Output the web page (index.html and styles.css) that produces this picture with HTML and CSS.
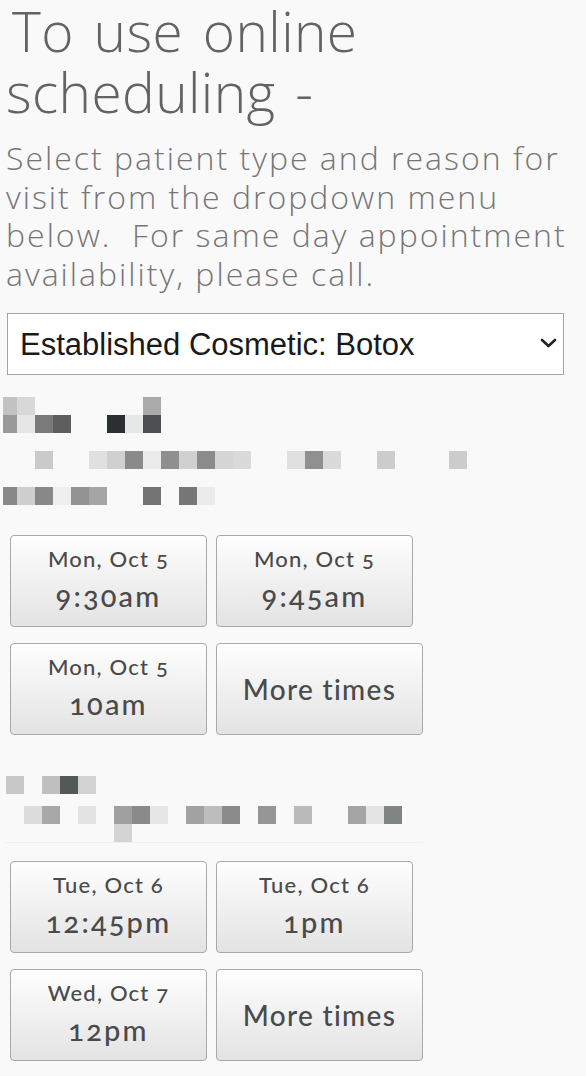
FILE: index.html
```html
<!DOCTYPE html>
<html lang="en">
<head>
<meta charset="utf-8">
<title>Online scheduling</title>
<link rel="stylesheet" href="styles.css">
</head>
<body>
<main class="page">
  <h1 class="title">To use online scheduling -</h1>
  <p class="intro">Select patient type and reason for visit from the dropdown menu below.&nbsp; For same day appointment availability, please call.</p>

  <div class="select-wrap">
    <select class="visit-select">
      <option>Established Cosmetic: Botox</option>
    </select>
    <svg class="chevron" width="17" height="10" viewBox="0 0 17 10"><path d="M2 2 L8.5 8 L15 2" fill="none" stroke="#222" stroke-width="2.6" stroke-linecap="round" stroke-linejoin="round"/></svg>
  </div>

  <div class="mosaic mosaic-a">
    <div class="mrow"><span class="g-c2"></span><span class="g-d8"></span><span></span><span></span><span></span><span></span><span></span><span></span><span class="g-aa"></span></div>
    <div class="mrow"><span class="g-99"></span><span class="g-e6"></span><span class="g-7a"></span><span class="g-5e"></span><span></span><span></span><span class="g-2b"></span><span class="g-e7"></span><span class="g-4b"></span></div>
    <div class="mrow"></div>
    <div class="mrow"><span></span><span></span><span class="g-ca"></span><span></span><span></span><span class="g-e0"></span><span class="g-d0"></span><span class="g-8a"></span><span class="g-eb"></span><span class="g-8f"></span><span class="g-d0"></span><span class="g-8c"></span><span class="g-d6"></span><span class="g-da"></span><span></span><span></span><span class="g-e0"></span><span class="g-90"></span><span class="g-da"></span><span></span><span></span><span class="g-cc"></span><span></span><span></span><span></span><span class="g-cc"></span></div>
    <div class="mrow"></div>
    <div class="mrow"><span class="g-88"></span><span class="g-cf"></span><span class="g-88"></span><span class="g-ef"></span><span class="g-93"></span><span class="g-a5"></span><span></span><span></span><span class="g-73"></span><span></span><span class="g-77"></span><span class="g-eb"></span></div>
  </div>

  <div class="slots">
    <button class="slot"><span class="day">Mon, Oct 5</span><span class="time">9:30am</span></button>
    <button class="slot"><span class="day">Mon, Oct 5</span><span class="time">9:45am</span></button>
    <button class="slot"><span class="day">Mon, Oct 5</span><span class="time">10am</span></button>
    <button class="slot more">More times</button>
  </div>

  <div class="mosaic mosaic-b">
    <div class="mrow"><span class="g-c8"></span><span></span><span class="g-bf"></span><span class="g-55"></span><span class="g-d2"></span></div>
    <div class="mrow"></div>
    <div class="mrow"><span></span><span class="g-dc"></span><span class="g-a8"></span><span></span><span class="g-e3"></span><span></span><span class="g-a0"></span><span class="g-8a"></span><span class="g-e6"></span><span></span><span class="g-a3"></span><span class="g-bd"></span><span class="g-8b"></span><span></span><span class="g-96"></span><span></span><span class="g-ba"></span><span></span><span></span><span class="g-a5"></span><span class="g-e4"></span><span class="g-80"></span></div>
    <div class="mrow"><span></span><span></span><span></span><span></span><span></span><span></span><span class="g-d4"></span></div>
  </div>

  <div class="slots">
    <button class="slot"><span class="day">Tue, Oct 6</span><span class="time">12:45pm</span></button>
    <button class="slot"><span class="day">Tue, Oct 6</span><span class="time">1pm</span></button>
    <button class="slot"><span class="day">Wed, Oct 7</span><span class="time">12pm</span></button>
    <button class="slot more">More times</button>
  </div>
</main>
</body>
</html>
```

FILE: styles.css
```css
html, body {
  margin: 0;
  padding: 0;
  background: #f9f9f9;
}

.page {
  padding: 0 6px;
  width: 574px;
}

.title {
  margin: 0;
  font-family: "Open Sans", "Lato", sans-serif;
  font-weight: 300;
  font-size: 55px;
  line-height: 61px;
  color: #636363;
  text-indent: 6px;
  letter-spacing: 0.4px;
  word-spacing: 5px;
}

.intro {
  margin: 17px 0 0;
  font-family: "Open Sans", "Lato", sans-serif;
  font-weight: 300;
  font-size: 32px;
  line-height: 38.5px;
  color: #767676;
  letter-spacing: 2px;
}

.select-wrap {
  position: relative;
  margin: 20px 0 0 1px;
  width: 557px;
}

.visit-select {
  display: block;
  width: 557px;
  height: 62px;
  margin: 0;
  padding: 0 40px 0 12px;
  box-sizing: border-box;
  border: 1px solid #a3a3a3;
  border-radius: 0;
  background: #fff;
  font-family: "Liberation Sans", Arial, sans-serif;
  font-size: 31px;
  color: #1a1a1a;
  -webkit-appearance: none;
  appearance: none;
}

.chevron {
  position: absolute;
  right: 7px;
  top: 25px;
  pointer-events: none;
}

.mosaic {
  display: flex;
  flex-direction: column;
}

.mrow {
  display: flex;
  height: 18px;
}

.mrow span {
  flex: none;
  width: 18px;
  height: 18px;
}

.mosaic-a {
  margin: 22px 0 0 -3px;
}

.mosaic-a .mrow span:first-child {
  width: 14px;
}

.mosaic-b {
  margin-top: 41px;
  height: 66px;
  width: 417px;
  overflow: hidden;
  border-bottom: 1px solid #efefef;
}

.slots {
  display: flex;
  flex-wrap: wrap;
  gap: 16px 9px;
  margin: 30px 0 0 4px;
  width: 440px;
}

.mosaic-b + .slots {
  margin-top: 18px;
}

.slot {
  display: flex;
  flex-direction: column;
  align-items: center;
  justify-content: center;
  box-sizing: border-box;
  width: 197px;
  height: 92px;
  margin: 0;
  padding: 0 0 4px;
  border: 1px solid #a9a9a9;
  border-radius: 4px;
  background: linear-gradient(#fefefe, #e3e3e3);
  color: #4a4a4a;
  font-family: "Lato", "Open Sans", sans-serif;
  font-weight: 500;
  font-variant-numeric: oldstyle-nums;
  cursor: pointer;
}

.slot .day {
  font-size: 22px;
  line-height: 26px;
  letter-spacing: 1.2px;
}

.slot .time {
  font-size: 29px;
  line-height: 32px;
  margin-top: 8px;
  letter-spacing: 2.2px;
}

.slot.more {
  width: 207px;
  padding: 0;
  font-size: 28px;
  line-height: 32px;
  letter-spacing: 1.3px;
}

.g-2b { background: #2b2f2f; }
.g-4b { background: #4b4f4f; }
.g-55 { background: #555858; }
.g-5e { background: #5e5e5e; }
.g-73 { background: #737373; }
.g-77 { background: #777777; }
.g-7a { background: #7a7a7a; }
.g-80 { background: #808484; }
.g-88 { background: #888888; }
.g-8a { background: #8a8a8a; }
.g-8b { background: #8b8b8b; }
.g-8c { background: #8c8c8c; }
.g-8f { background: #8f8f8f; }
.g-90 { background: #909090; }
.g-93 { background: #939393; }
.g-96 { background: #969696; }
.g-99 { background: #999999; }
.g-a0 { background: #a0a0a0; }
.g-a3 { background: #a3a3a3; }
.g-a5 { background: #a5a5a5; }
.g-a8 { background: #a8a8a8; }
.g-aa { background: #aaaaaa; }
.g-ba { background: #bababa; }
.g-bd { background: #bdbdbd; }
.g-bf { background: #bfbfbf; }
.g-c2 { background: #c2c2c2; }
.g-c8 { background: #c8c8c8; }
.g-ca { background: #cacaca; }
.g-cc { background: #cccccc; }
.g-cf { background: #cfcfcf; }
.g-d0 { background: #d0d0d0; }
.g-d2 { background: #d2d2d2; }
.g-d4 { background: #d4d4d4; }
.g-d6 { background: #d6d6d6; }
.g-d8 { background: #d8d8d8; }
.g-da { background: #dadada; }
.g-dc { background: #dcdcdc; }
.g-e0 { background: #e0e0e0; }
.g-e3 { background: #e3e3e3; }
.g-e4 { background: #e4e4e4; }
.g-e6 { background: #e6e6e6; }
.g-e7 { background: #e6e8e8; }
.g-eb { background: #ebebeb; }
.g-ef { background: #efefef; }
```
